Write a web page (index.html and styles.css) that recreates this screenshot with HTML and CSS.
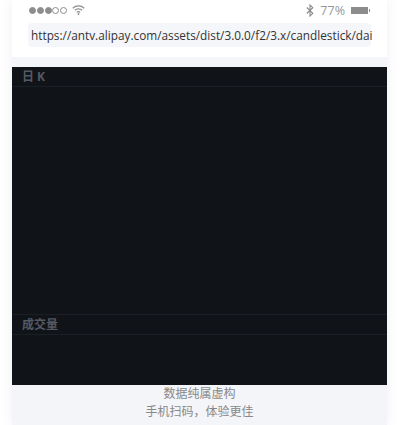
FILE: index.html
```html
<!DOCTYPE html>
<html lang="zh-CN">
<head>
    <meta charset="UTF-8">
    <meta name="viewport" content="width=device-width, initial-scale=1.0">
    <title>F2 Candlestick</title>
    <link rel="stylesheet" href="styles.css">
</head>
<body>

<div class="phone">
    <div class="phone-header">
        <div class="status-bar">
            <div class="status-left">
                <span class="signal">
                    <i class="dot"></i><i class="dot"></i><i class="dot"></i><i class="dot empty"></i><i class="dot empty"></i>
                </span>
                <svg class="wifi" width="13" height="10" viewBox="0 0 13 10" fill="none" stroke="#8c8c8c" stroke-width="1.2">
                    <path d="M.8 3.2C4 .2 9 .2 12.200 3.200"/>
                    <path d="M2.800 5.200C4.800 3.400 8.200 3.400 10.200 5.200"/>
                    <path d="M4.800 7.200C5.800 6.400 7.200 6.400 8.200 7.200"/>
                    <circle cx="6.500" cy="9" r=".9" fill="#8c8c8c" stroke="none"/>
                </svg>
            </div>
            <div class="status-right">
                <svg class="bluetooth" width="8" height="13" viewBox="0 0 8 13" fill="none" stroke="#8c8c8c" stroke-width="1.100">
                    <path d="M.8 3.500L6.800 9.300 4 12V1L6.800 3.700.8 9.500"/>
                </svg>
                <span class="battery-text">77%</span>
                <span class="battery"><i class="battery-level"></i></span>
            </div>
        </div>
        <div class="url-bar">https://antv.alipay.com/assets/dist/3.0.0/f2/3.x/candlestick/dai</div>
    </div>

    <div class="chart">
        <div class="chart-title">日 K</div>
        <div class="chart-main"></div>
        <div class="chart-title">成交量</div>
        <div class="chart-volume"></div>
    </div>

    <div class="notice">
        <p>数据纯属虚构</p>
        <p>手机扫码，体验更佳</p>
    </div>
</div>

</body>
</html>
```

FILE: styles.css
```css
body {
    margin: 0;
    background-color: #fff;
    font-family: "Open Sans", "Noto Sans CJK SC", sans-serif;
    overflow: hidden;
}
.phone {
    width: 375px;
    height: 425px;
    margin-left: 12px;
    background-color: #f4f5f9;
    box-shadow: 0 0 12px rgba(60, 70, 110, 0.08);
}

/* Browser header */
.phone-header {
    height: 57px;
    padding: 0 16px;
    box-sizing: border-box;
    background-color: #fff;
    margin-bottom: 10px;
}
.status-bar {
    display: flex;
    justify-content: space-between;
    align-items: center;
    height: 23px;
    padding: 0 2px 3px 1px;
    box-sizing: border-box;
}
.status-left,
.status-right {
    display: flex;
    align-items: center;
}
.signal {
    display: flex;
    gap: 0.8px;
    margin-right: 5px;
}
.dot {
    width: 5px;
    height: 5px;
    border-radius: 50%;
    background-color: #8c8c8c;
    border: 0.5px solid #8c8c8c;
}
.dot.empty {
    background-color: #fff;
}
.bluetooth {
    margin-right: 6px;
}
.battery-text {
    font-size: 12.500px;
    color: #979797;
    margin-right: 6px;
}
.battery {
    position: relative;
    width: 17px;
    height: 7px;
    margin-right: 1px;
    box-sizing: border-box;
    border: 0.5px solid #8c8c8c;
    background-color: #fff;
}
.battery::after {
    content: "";
    position: absolute;
    right: -2.500px;
    top: 1.500px;
    width: 1px;
    height: 3px;
    background-color: #8c8c8c;
}
.battery-level {
    display: block;
    height: 100%;
    background-color: #8c8c8c;
}
.url-bar {
    height: 24px;
    padding-left: 3px;
    background-color: #f4f6f9;
    border-radius: 4px;
    font-size: 11.800px;
    line-height: 24px;
    color: #333;
    white-space: nowrap;
}

/* Chart */
.chart {
    background-color: #101318;
}
.chart-title {
    height: 20px;
    padding-left: 10px;
    box-sizing: border-box;
    font-size: 12px;
    font-weight: bold;
    line-height: 19px;
    color: #565962;
    border-bottom: 1px solid #1b1e25;
}
.chart-main {
    height: 227px;
    border-bottom: 1px solid #1b1e25;
}
.chart-volume {
    height: 50px;
}

/* Notice */
.notice {
    text-align: center;
    font-size: 12px;
    line-height: 18px;
    color: #888;
}
.notice p {
    margin: 0;
}
```
